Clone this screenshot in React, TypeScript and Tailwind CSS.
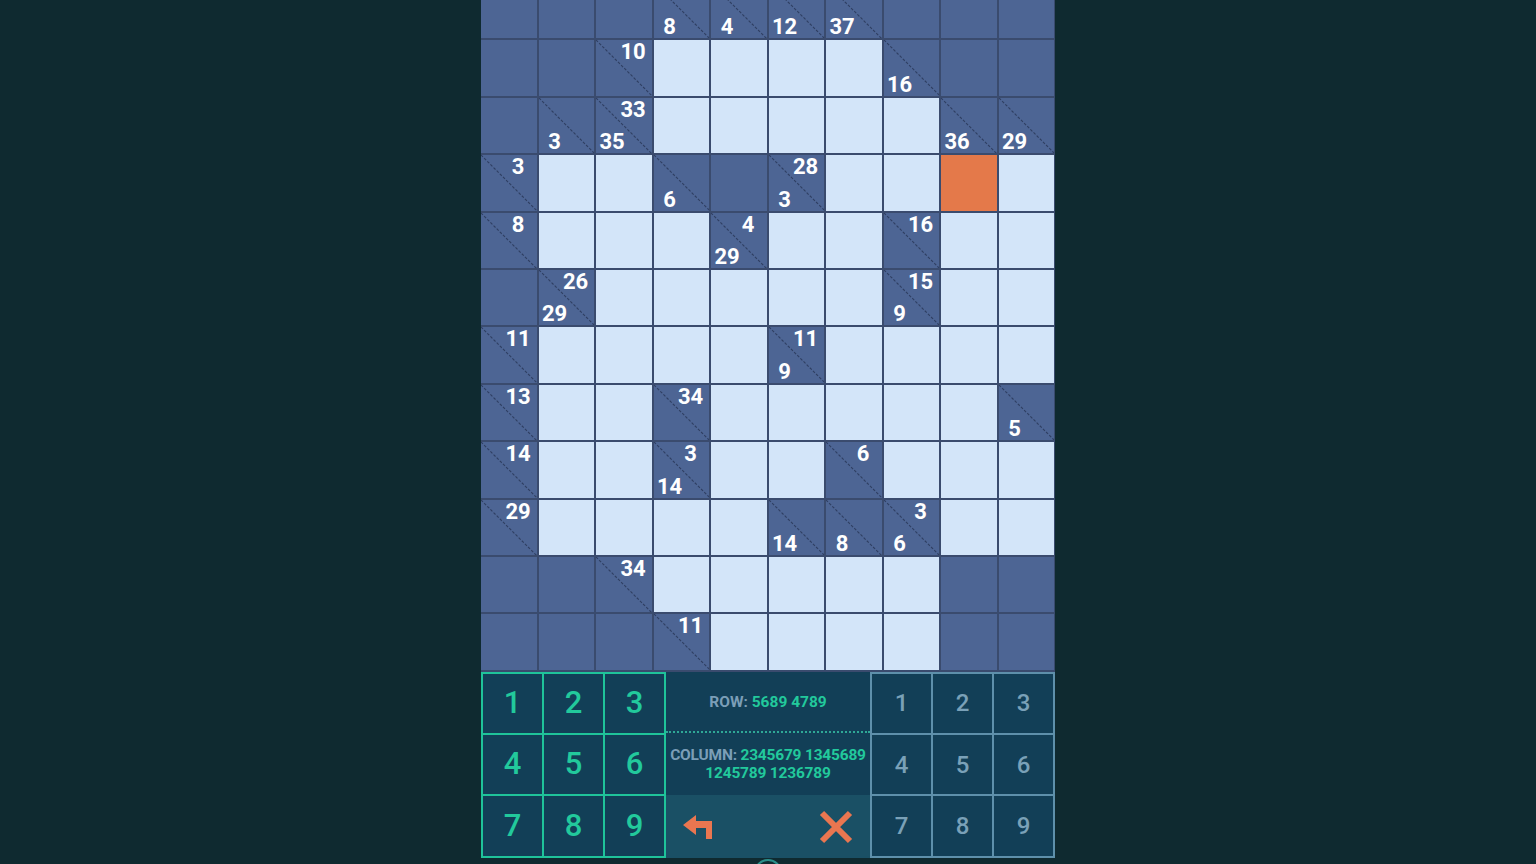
import React from 'react'

type Clue = { a?: number; d?: number }
type Cell = '#' | '.' | 'O' | Clue

const font = { fontFamily: 'Roboto, "Noto Sans", sans-serif' }

// puzzle layout, row by row
const rows: Cell[][] = [
  ['#', '#', '#', { d: 8 }, { d: 4 }, { d: 12 }, { d: 37 }, '#', '#', '#'],
  ['#', '#', { a: 10 }, '.', '.', '.', '.', { d: 16 }, '#', '#'],
  ['#', { d: 3 }, { a: 33, d: 35 }, '.', '.', '.', '.', '.', { d: 36 }, { d: 29 }],
  [{ a: 3 }, '.', '.', { d: 6 }, '#', { a: 28, d: 3 }, '.', '.', 'O', '.'],
  [{ a: 8 }, '.', '.', '.', { a: 4, d: 29 }, '.', '.', { a: 16 }, '.', '.'],
  ['#', { a: 26, d: 29 }, '.', '.', '.', '.', '.', { a: 15, d: 9 }, '.', '.'],
  [{ a: 11 }, '.', '.', '.', '.', { a: 11, d: 9 }, '.', '.', '.', '.'],
  [{ a: 13 }, '.', '.', { a: 34 }, '.', '.', '.', '.', '.', { d: 5 }],
  [{ a: 14 }, '.', '.', { a: 3, d: 14 }, '.', '.', { a: 6 }, '.', '.', '.'],
  [{ a: 29 }, '.', '.', '.', '.', { d: 14 }, { d: 8 }, { a: 3, d: 6 }, '.', '.'],
  ['#', '#', { a: 34 }, '.', '.', '.', '.', '.', '#', '#'],
  ['#', '#', '#', { a: 11 }, '.', '.', '.', '.', '#', '#'],
]

function GridCell({ cell }: { cell: Cell }) {
  if (cell === '.') return <div className="bg-[#d3e5f9]" />
  if (cell === 'O') return <div className="bg-[#e4794a]" />
  if (cell === '#') return <div className="bg-[#4d6594]" />
  return (
    <div className="relative bg-[#4d6594] overflow-hidden">
      <svg className="absolute inset-0 w-full h-full" viewBox="0 0 100 100" preserveAspectRatio="none">
        <line x1="0" y1="0" x2="100" y2="100" stroke="#2f3f62" strokeWidth="2" strokeDasharray="5 3" />
      </svg>
      {cell.a !== undefined && (
        <span className="absolute left-[17px] top-0 w-[40px] h-[24px] flex items-center justify-center text-[22px] font-bold text-white leading-none">
          {cell.a}
        </span>
      )}
      {cell.d !== undefined && (
        <span className="absolute -left-[4px] -bottom-[1px] w-[40px] h-[24px] flex items-center justify-center text-[22px] font-bold text-white leading-none">
          {cell.d}
        </span>
      )}
    </div>
  )
}

function UndoArrow() {
  return (
    <svg width="36" height="28" viewBox="0 0 36 28">
      <path d="M1 12 L14 2 L14 8 L30 8 L30 26 L24 26 L24 15 L14 15 L14 22 Z" fill="#ea7650" />
    </svg>
  )
}

function Cross() {
  return (
    <svg width="36" height="36" viewBox="0 0 36 36">
      <path d="M4 4 L32 32 M32 4 L4 32" stroke="#ea7650" strokeWidth="6" strokeLinecap="butt" />
    </svg>
  )
}

export default function App() {
  const nums = [1, 2, 3, 4, 5, 6, 7, 8, 9]
  return (
    <div className="w-[1536px] h-[864px] bg-[#0f2a30] overflow-hidden relative" style={font}>
      <div className="w-[574px] ml-[481px] -mt-[17px]">
        <div className="grid grid-cols-[repeat(10,1fr)] grid-rows-[repeat(12,55.4px)] gap-[2px] bg-[#3a4b6e] pr-[1px] pb-[2px]">
          {rows.flatMap((r, i) => r.map((c, j) => <GridCell key={`${i}-${j}`} cell={c} />))}
        </div>

        <div className="flex h-[186px] bg-[#123f57]">
          <div className="w-[185px] grid grid-cols-3 gap-[2px] bg-[#1fc39a] p-[2px]">
            {nums.map(n => (
              <div key={n} className="bg-[#123f57] flex items-center justify-center text-[31px] font-medium text-[#22c99c]">
                {n}
              </div>
            ))}
          </div>

          <div className="w-[204px] flex flex-col">
            <div className="h-[61px] flex items-center justify-center text-[15.5px] font-bold text-[#7b9eb7] border-b-2 border-dotted border-[#2fa896] pt-[2px]">
              ROW:&nbsp;<span className="text-[#22c99c]">5689 4789</span>
            </div>
            <div className="h-[62px] flex flex-col items-center justify-center text-[15.5px] font-bold leading-[18px] text-[#22c99c] tracking-[-0.2px]">
              <div className="whitespace-nowrap"><span className="text-[#7b9eb7]">COLUMN:</span> 2345679 1345689</div>
              <div>1245789 1236789</div>
            </div>
            <div className="flex-1 bg-[#1a5065] flex items-center justify-between pl-[16px] pr-[16px] pt-[2px]">
              <UndoArrow />
              <Cross />
            </div>
          </div>

          <div className="w-[185px] grid grid-cols-3 gap-[2px] bg-[#5e90ab] p-[2px]">
            {nums.map(n => (
              <div key={n} className="bg-[#123f57] flex items-center justify-center text-[24px] font-medium text-[#7aa1b8]">
                {n}
              </div>
            ))}
          </div>
        </div>
      </div>
      <div className="absolute left-[754px] top-[859px] w-[28px] h-[28px] rounded-full border-2 border-[#2a8f8a]" />
    </div>
  )
}
